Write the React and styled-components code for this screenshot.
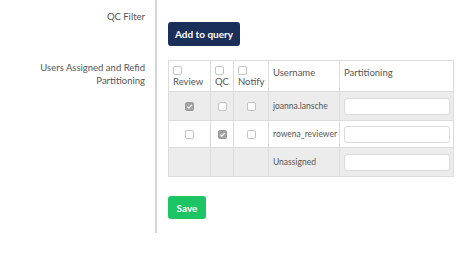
import React from "react";
import styled, { createGlobalStyle } from "styled-components";

const Global = createGlobalStyle`
  html, body { margin: 0; padding: 0; background: #fff; }
  body { font-family: Lato, "Open Sans", sans-serif; color: #444; }
`;

const Form = styled.div`
  display: grid;
  grid-template-columns: 157px 1fr;
  width: 474px;
`;

const Label = styled.div`
  border-right: 2px solid #d4d4d4;
  padding: ${(p) => p.$pad || "0"};
  padding-right: 10px;
  text-align: right;
  font-size: 9.5px;
  line-height: 13px;
  color: #555;
`;

const Field = styled.div`
  padding: ${(p) => p.$pad || "0"};
  padding-left: 11px;
`;

const Button = styled.button`
  border: none;
  border-radius: 3px;
  font-family: Lato, sans-serif;
  font-weight: 700;
  font-size: 10px;
  color: #fff;
  background: ${(p) => p.$bg};
  height: ${(p) => p.$h}px;
  width: ${(p) => p.$w}px;
  padding: 0;
  cursor: pointer;
  display: block;
`;

const Table = styled.table`
  border-collapse: collapse;
  table-layout: fixed;
  width: 285px;
  font-size: 9.5px;
  color: #555;
`;

const Row = styled.tr`
  background: ${(p) => (p.$gray ? "#ececec" : "#fff")};
`;

const Th = styled.th`
  border: 1px solid #dcdcdc;
  font-weight: 400;
  text-align: left;
  vertical-align: top;
  padding: 5px 3px 3px 4px;
  line-height: 13px;
  height: 24px;
  width: ${(p) => p.$w}px;
  box-sizing: border-box;
  white-space: nowrap;
`;

const Td = styled.td`
  border: 1px solid #dcdcdc;
  padding: 0 4px;
  height: ${(p) => p.$h}px;
  text-align: ${(p) => (p.$center ? "center" : "left")};
  vertical-align: middle;
  font-size: 8.5px;
  white-space: nowrap;
`;

const Box = styled.span`
  display: ${(p) => (p.$block ? "block" : "inline-block")};
  width: 9px;
  height: 9px;
  box-sizing: border-box;
  border-radius: 2px;
  border: 1px solid ${(p) => (p.$checked ? "#9a9a9a" : "#c4c4c4")};
  background: ${(p) => (p.$checked ? "#a3a3a3" : "#fff")};
  vertical-align: middle;
  position: relative;
`;

const Tick = styled.svg`
  position: absolute;
  left: 0;
  top: 0;
`;

const Check = ({ checked, block }) => (
  <Box $checked={checked} $block={block}>
    {checked && (
      <Tick width="7" height="7" viewBox="0 0 7 7">
        <path d="M1.3 3.6 L2.9 5.1 L5.8 1.8" stroke="#fff" strokeWidth="1.2" fill="none" />
      </Tick>
    )}
  </Box>
);

const TextInput = styled.input`
  width: 106px;
  height: 17px;
  box-sizing: border-box;
  border: 1px solid #dadada;
  border-radius: 3px;
  background: #fff;
  display: block;
`;

const users = [
  { name: "joanna.lansche", review: true, qc: false, gray: true, h: 28 },
  { name: "rowena_reviewer", review: false, qc: true, gray: false, h: 26 },
];

export default function App() {
  return (
    <>
      <Global />
      <Form>
        <Label $pad="10px 0 0 0">QC Filter</Label>
        <Field $pad="22px 0 14px 0">
          <Button $bg="#1b2f5b" $h={24} $w={72}>Add to query</Button>
        </Field>
        <Label $pad="1px 0 0 0">
          Users Assigned and Refid
          <br />
          Partitioning
        </Label>
        <Field>
          <Table>
            <thead>
              <Row>
                <Th $w={42}><Check block />Review</Th>
                <Th $w={23}><Check block />QC</Th>
                <Th $w={35}><Check block />Notify</Th>
                <Th $w={71}>Username</Th>
                <Th $w={114}>Partitioning</Th>
              </Row>
            </thead>
            <tbody>
              {users.map((u) => (
                <Row key={u.name} $gray={u.gray}>
                  <Td $center $h={u.h}><Check checked={u.review} /></Td>
                  <Td $center $h={u.h}><Check checked={u.qc} /></Td>
                  <Td $center $h={u.h}><Check /></Td>
                  <Td $h={u.h}>{u.name}</Td>
                  <Td $h={u.h}><TextInput /></Td>
                </Row>
              ))}
              <Row $gray>
                <Td $h={28} />
                <Td $h={28} />
                <Td $h={28} />
                <Td $h={28}>Unassigned</Td>
                <Td $h={28}><TextInput /></Td>
              </Row>
            </tbody>
          </Table>
        </Field>
        <Label />
        <Field $pad="19px 0 14px 0">
          <Button $bg="#1dc463" $h={23} $w={38}>Save</Button>
        </Field>
      </Form>
    </>
  );
}
